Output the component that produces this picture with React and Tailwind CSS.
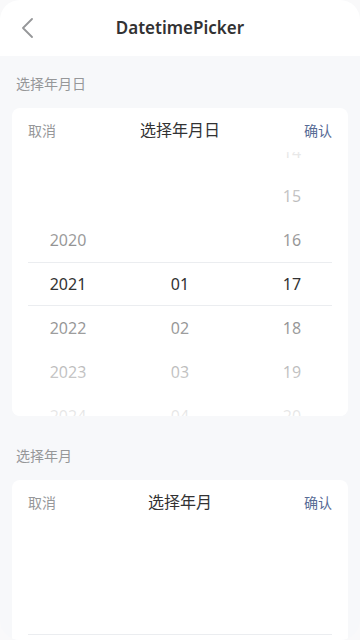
import React from 'react'

const ROW = 44

function Column({ items, selected }) {
  // items are placed so that the selected one sits in the middle of a 264px window
  const offset = 110 - selected * ROW
  return (
    <div className="flex-1 overflow-hidden h-full">
      <div style={{ transform: `translateY(${offset}px)` }}>
        {items.map((it, i) => (
          <div key={i} className="h-[44px] flex items-center justify-center text-[16px] text-[#323233]">
            {it}
          </div>
        ))}
      </div>
    </div>
  )
}

function Picker({ title, columns }) {
  return (
    <div className="mx-3 shrink-0 bg-white rounded-lg overflow-hidden">
      <div className="h-[44px] flex items-center justify-between px-4">
        <span className="text-[14px] text-[#969799]">取消</span>
        <span className="text-[16px] text-[#323233]">{title}</span>
        <span className="text-[14px] text-[#576b95]">确认</span>
      </div>
      <div className="relative h-[264px] flex">
        {columns.map((c, i) => (
          <Column key={i} items={c.items} selected={c.selected} />
        ))}
        <div className="absolute inset-x-0 top-0 h-[110px] bg-gradient-to-b from-white/90 to-white/40 pointer-events-none" />
        <div className="absolute inset-x-0 bottom-0 h-[110px] bg-gradient-to-t from-white/90 to-white/40 pointer-events-none" />
        <div className="absolute left-4 right-4 top-[110px] h-[44px] border-y border-[#ebedf0] pointer-events-none" />
      </div>
    </div>
  )
}

export default function App() {
  const years = ['2020', '2021', '2022', '2023', '2024', '2025']
  const months = ['01', '02', '03', '04', '05', '06']
  const days = ['14', '15', '16', '17', '18', '19', '20', '21']

  return (
    <div className="w-[360px] h-[640px] bg-[#f9f9fa]" style={{ fontFamily: '"Noto Sans", "Noto Sans CJK SC", sans-serif' }}>
      <div className="h-full rounded-[20px] overflow-hidden bg-[#f7f8fa] flex flex-col">
        <div className="h-[56px] bg-white relative flex items-center justify-center shrink-0">
          <svg className="absolute left-[20px] top-[18px]" width="16" height="20" viewBox="0 0 16 20" fill="none">
            <polyline points="12,1 3,10 12,19" stroke="#969799" strokeWidth="1.8" strokeLinecap="round" strokeLinejoin="round" />
          </svg>
          <span className="text-[17px] font-semibold text-[#323233]">DatetimePicker</span>
        </div>

        <div className="px-4 pt-5 pb-4 text-[14px] leading-4 text-[#969799] shrink-0">选择年月日</div>
        <Picker
          title="选择年月日"
          columns={[
            { items: years, selected: 1 },
            { items: months, selected: 0 },
            { items: days, selected: 3 },
          ]}
        />

        <div className="px-4 pt-8 pb-4 text-[14px] leading-4 text-[#969799] shrink-0">选择年月</div>
        <Picker
          title="选择年月"
          columns={[
            { items: ['2021', '2022', '2023'], selected: 0 },
            { items: ['01', '02', '03'], selected: 0 },
          ]}
        />
      </div>
    </div>
  )
}
